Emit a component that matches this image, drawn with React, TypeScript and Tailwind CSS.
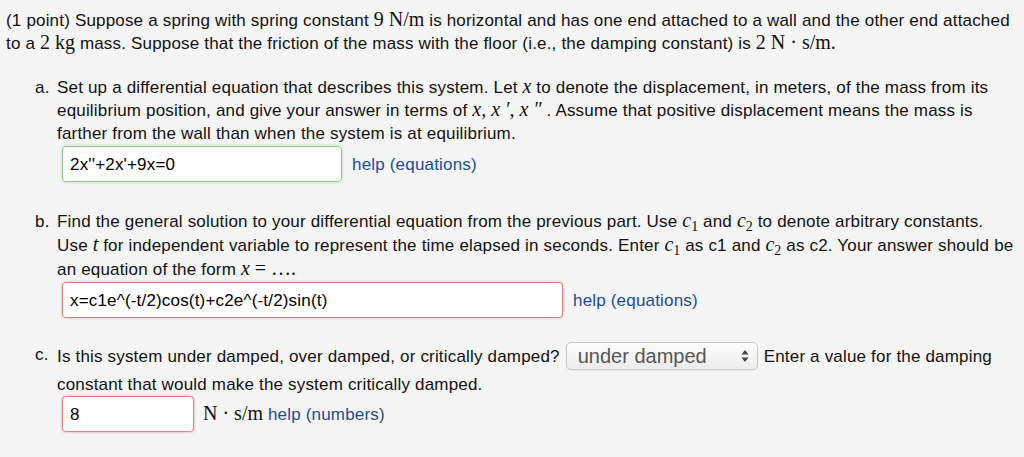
import type { ReactNode } from "react";

function M({ children }: { children: ReactNode }) {
  return <span className="font-['Liberation_Serif','Times_New_Roman',serif] text-[20px] leading-none tracking-normal">{children}</span>;
}

function V({ children }: { children: ReactNode }) {
  return <span className="font-['Liberation_Serif','Times_New_Roman',serif] text-[20px] italic leading-none tracking-normal">{children}</span>;
}

function C({ n }: { n: number }) {
  return (
    <span className="font-['Liberation_Serif','Times_New_Roman',serif] text-[20px] italic leading-none tracking-normal">
      c<sub className="text-[14px] leading-[0] not-italic">{n}</sub>
    </span>
  );
}

function Answer({ value, width, ok }: { value: string; width: string; ok: boolean }) {
  return (
    <div
      className={
        "flex h-[36px] items-center rounded-[4px] border bg-white px-[7px] text-[17px] text-black " +
        width +
        (ok
          ? " border-[#92c892] shadow-[0_0_3px_rgba(90,170,90,0.45)]"
          : " border-[#d98282] shadow-[0_0_3px_rgba(200,80,80,0.45)]")
      }
    >
      {value}
    </div>
  );
}

function Help({ kind }: { kind: string }) {
  return <span className="text-[17px] text-[#1b4c9b]">help ({kind})</span>;
}

export default function App() {
  return (
    <div className="min-h-screen bg-[#f5f5f5] pl-[6px] pt-[9px] font-['Liberation_Sans',Arial,sans-serif] text-[17px] leading-[23px] tracking-[0.18px] text-[#111]">
      <p className="whitespace-nowrap">
        (1 point) Suppose a spring with spring constant <M>9 N/m</M> is horizontal and has one end attached to a wall and the other end attached
        <br />
        to a <M>2 kg</M> mass. Suppose that the friction of the mass with the floor (i.e., the damping constant) is <M>2 N · s/m.</M>
      </p>

      <ol className="mt-[21px] flex flex-col">
        <li className="flex">
          <span className="w-[51px] pl-[29px]">a.</span>
          <div className="flex flex-col">
            <p className="whitespace-nowrap">
              Set up a differential equation that describes this system. Let <V>x</V> to denote the displacement, in meters, of the mass from its
              <br />
              equilibrium position, and give your answer in terms of <V>x, x ′, x ″</V> . Assume that positive displacement means the mass is
              <br />
              farther from the wall than when the system is at equilibrium.
            </p>
            <div className="ml-[5px] mt-[1px] flex items-center gap-[10px]">
              <Answer value="2x''+2x'+9x=0" width="w-[280px]" ok />
              <Help kind="equations" />
            </div>
          </div>
        </li>

        <li className="mt-[28px] flex">
          <span className="w-[51px] pl-[29px]">b.</span>
          <div className="flex flex-col">
            <p className="whitespace-nowrap leading-[24px]">
              Find the general solution to your differential equation from the previous part. Use <C n={1} /> and <C n={2} /> to denote arbitrary constants.
              <br />
              Use <V>t</V> for independent variable to represent the time elapsed in seconds. Enter <C n={1} /> as c1 and <C n={2} /> as c2. Your answer should be
              <br />
              an equation of the form <V>x</V> <M>= ….</M>
            </p>
            <div className="ml-[5px] mt-0 flex items-center gap-[10px]">
              <Answer value="x=c1e^(-t/2)cos(t)+c2e^(-t/2)sin(t)" width="w-[501px]" ok={false} />
              <Help kind="equations" />
            </div>
          </div>
        </li>

        <li className="mt-[24px] flex">
          <span className="w-[51px] pl-[29px] pt-[1px]">c.</span>
          <div className="flex flex-col">
            <div className="flex items-center whitespace-nowrap">
              <span>Is this system under damped, over damped, or critically damped?</span>
              <div className="ml-[6px] mr-[6px] flex h-[28px] w-[192px] items-center justify-between rounded-[5px] border border-[#c8c8c8] bg-gradient-to-b from-[#fdfdfd] to-[#ececec] pl-[11px] pr-[8px] shadow-[0_1px_1px_rgba(0,0,0,0.06)]">
                <span className="text-[20px] leading-none tracking-normal text-[#555]">under damped</span>
                <svg width="8" height="14" viewBox="0 0 8 14" className="text-[#444]">
                  <path d="M4 1 L7.5 5.5 H0.5 Z" fill="currentColor" />
                  <path d="M4 13 L7.5 8.5 H0.5 Z" fill="currentColor" />
                </svg>
              </div>
              <span>Enter a value for the damping</span>
            </div>
            <p className="mt-[3px]">constant that would make the system critically damped.</p>
            <div className="ml-[5px] mt-0 flex items-center gap-[9px]">
              <Answer value="8" width="w-[132px]" ok={false} />
              <span className="whitespace-nowrap">
                <M>N · s/m</M> <Help kind="numbers" />
              </span>
            </div>
          </div>
        </li>
      </ol>
    </div>
  );
}
